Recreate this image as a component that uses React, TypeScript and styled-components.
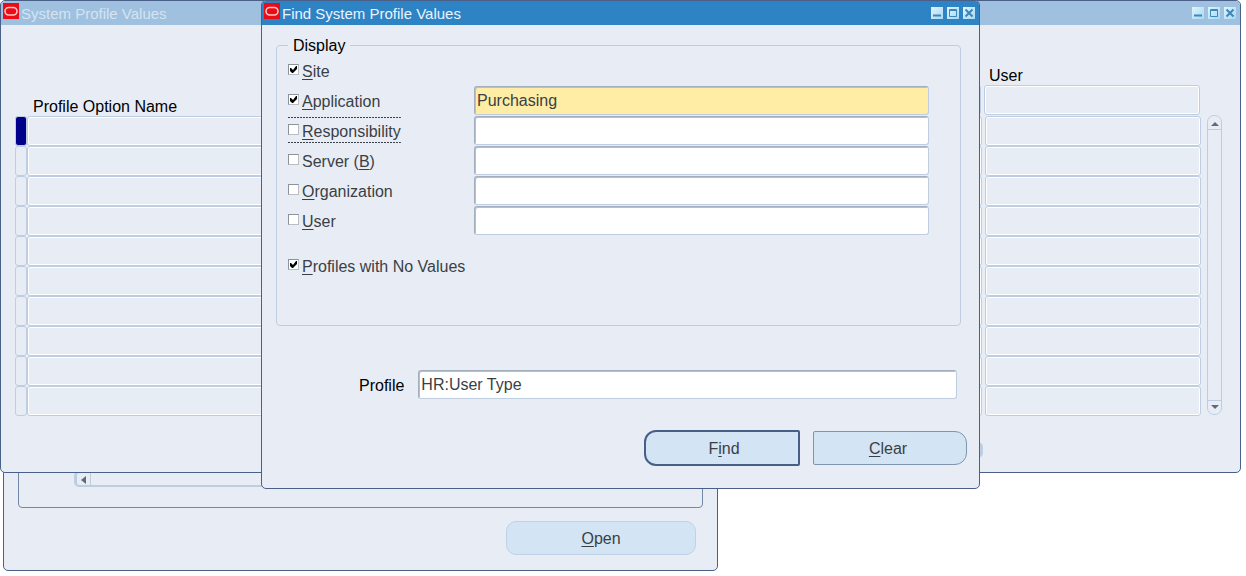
import React from "react";
import styled, { createGlobalStyle, css } from "styled-components";

const c = {
  face: "#e8edf5",
  line: "#bfcde0",
  frame: "#4b6088",
  titleOn: "#2d83c4",
  titleOff: "#9fc0de",
  button: "#d3e4f4",
  ink: "#3a3f45",
};

const GlobalStyle = createGlobalStyle`
  *, *::before, *::after { box-sizing: border-box; }
  body { margin: 0; background: #fff; }
  body, button, input { font: 16px/20px "Liberation Sans", Arial, sans-serif; }
  button { padding: 0; }
  u { text-decoration-thickness: 1px; text-underline-offset: 2px; text-decoration-skip-ink: none; }
`;

const Desktop = styled.main`
  position: relative;
  min-height: 100vh;
  overflow: hidden;
`;

const Frame = styled.section<{ $top: number; $left: number; $right: number }>`
  position: absolute;
  top: ${(p) => p.$top}px;
  left: ${(p) => p.$left}px;
  right: ${(p) => p.$right}px;
  background: ${c.face};
  border: 1px solid ${c.frame};
  border-radius: 5px;
  overflow: hidden;
`;

const TitleBar = styled.header<{ $active: boolean }>`
  display: flex;
  align-items: center;
  height: 24px;
  padding: 0 4px 0 2px;
  gap: 2px;
  background: ${(p) => (p.$active ? c.titleOn : c.titleOff)};
  color: ${(p) => (p.$active ? "#e9f4fd" : "#d3e4f4")};
`;

const Title = styled.h1`
  flex: 1;
  margin: 0;
  padding-top: 2px;
  font-size: 15px;
  line-height: 20px;
  font-weight: normal;
`;

const Logo = styled.svg`
  display: block;
  width: 16px;
  height: 16px;
  margin-bottom: 4px;
`;

const Controls = styled.div`
  display: flex;
  gap: 4px;
`;

const ControlButton = styled.button`
  width: 12px;
  height: 12px;
  border: 0;
  background: linear-gradient(135deg, #e0f4fd, #a6d8f2);
  svg { display: block; }
`;

const ProfilesBody = styled.div`
  padding: 40px 18px 14px 14px;
`;

const ColumnHeads = styled.div`
  display: flex;
  align-items: flex-end;
  gap: 3px;
  padding: 0 22px 1px 18px;
`;

const HeadLabel = styled.span`
  flex: 1;
  line-height: 16px;
`;

const HeadColumn = styled.label`
  display: flex;
  flex-direction: column;
  width: 216px;
  span { height: 20px; padding: 1px 0 0 5px; }
`;

const Records = styled.div`
  display: flex;
  gap: 6px;
`;

const RecordList = styled.div`
  flex: 1;
`;

const Record = styled.div`
  display: flex;
`;

const Marker = styled.span<{ $current: boolean }>`
  width: 12px;
  height: 30px;
  border: 1px solid ${c.line};
  border-radius: 3px;
  ${(p) => p.$current && css`
    background: #00008b;
  `}
`;

const GridField = styled.input<{ $wide?: boolean }>`
  width: 216px;
  height: 30px;
  padding: 0 3px;
  border: 1px solid ${c.line};
  border-radius: 3px;
  background: ${c.face};
  box-shadow: inset 0 0 0 1px #fff;
  outline: 0;
  ${(p) => p.$wide && css`
    flex: 1;
    min-width: 0;
  `}
  & + & { margin-left: 3px; }
`;

const VerticalBar = styled.div`
  display: flex;
  flex-direction: column;
  justify-content: space-between;
  width: 15px;
  height: 300px;
  margin-top: -1px;
  border: 1px solid ${c.line};
  border-radius: 7px;
`;

const ArrowButton = styled.button<{ $edge: "top" | "bottom" | "left" }>`
  display: grid;
  place-items: center;
  width: 13px;
  height: 13px;
  border: 0 solid ${c.line};
  background: none;
  ${(p) => p.$edge === "top" && "height: 14px; padding-top: 2px; border-bottom-width: 1px;"}
  ${(p) => p.$edge === "bottom" && "height: 14px; padding-bottom: 2px; border-top-width: 1px;"}
  ${(p) => p.$edge === "left" && "width: 14px; border-right-width: 1px;"}
`;

const HorizontalBar = styled.div`
  height: 16px;
  border: 2px solid ${c.line};
  border-left-width: 3px;
  border-radius: 5px;
`;

const ProfilesBar = styled(HorizontalBar)`
  margin: 26px 239px 0 400px;
  border-right-width: 3px;
`;

const FindBody = styled.form`
  padding: 10px 12px 22px 14px;
`;

const Group = styled.fieldset`
  min-width: 0;
  margin: 0 6px 0 0;
  padding: 0 31px 44px 11px;
  border: 1px solid ${c.line};
  border-radius: 4px;
  legend { padding: 1px 5px 0; color: #000; }
`;

const OptionRow = styled.div<{ $apart?: boolean }>`
  display: flex;
  align-items: flex-start;
  height: 30px;
  margin-top: ${(p) => (p.$apart ? 15 : 0)}px;
`;

const OptionCell = styled.div`
  width: 186px;
  padding-top: 1px;
  white-space: nowrap;
`;

const OptionLabel = styled.label<{ $focused?: boolean }>`
  display: inline-flex;
  align-items: center;
  gap: 3px;
  height: 26px;
  color: ${c.ink};
  ${(p) => p.$focused && css`
    background:
      repeating-linear-gradient(90deg, #39404a 0 2px, transparent 2px 3px) top / 100% 1px no-repeat,
      repeating-linear-gradient(90deg, #39404a 0 2px, transparent 2px 3px) bottom / 100% 1px no-repeat;
  `}
  span { padding-top: 3px; }
`;

const CheckBox = styled.input`
  appearance: none;
  width: 11px;
  height: 11px;
  margin: 0 0 1px;
  border: 1px solid #b9bec5;
  border-top-color: #8c9298;
  border-left-color: #8c9298;
  background: #fff;
  outline: 0;
  &:checked::after {
    content: "";
    display: block;
    width: 7px;
    height: 7px;
    margin: 1px;
    background: #000;
    clip-path: polygon(0 2px, 1px 2px, 3px 4px, 6px 0, 7px 0, 7px 3px, 3px 7px, 2px 7px, 0 5px);
  }
`;

const TextField = styled.input<{ $filled?: boolean }>`
  flex: 1;
  min-width: 0;
  height: 29px;
  padding: 0 2px;
  border: 1px solid ${c.line};
  border-top-color: #a3afbf;
  border-left-color: #a3afbf;
  border-radius: 3px;
  background: ${(p) => (p.$filled ? "#ffeda6" : "#fff")};
  box-shadow: inset 1px 1px #b3c0cf;
  color: ${c.ink};
  outline: 0;
`;

const ProfileRow = styled.label`
  display: flex;
  align-items: center;
  gap: 14px;
  margin-top: 44px;
  padding: 0 10px 0 83px;
  span { padding-top: 2px; }
`;

const Actions = styled.div`
  display: flex;
  align-items: center;
  justify-content: flex-end;
  gap: 13px;
  margin-top: 31px;
`;

const PushButton = styled.button<{ $kind: "primary" | "secondary" | "plain" }>`
  width: 154px;
  height: 34px;
  padding: 1px 4px 0 0;
  border: 1px solid #7f94ae;
  background: ${c.button};
  color: ${c.ink};
  border-radius: 2px 12px 12px 2px;
  ${(p) => p.$kind === "primary" && css`
    width: 156px;
    height: 36px;
    padding: 1px 0 0 4px;
    border: 2px solid #455f86;
    border-radius: 12px 2px 2px 12px;
  `}
  ${(p) => p.$kind === "plain" && css`
    width: 190px;
    padding: 1px 0 0;
    border-color: #bfd1e4;
    border-radius: 10px;
  `}
`;

const NavigatorBody = styled.div`
  padding: 10px 14px 15px;
`;

const NavigatorPanel = styled.div`
  padding: 20px 140px 20px 55px;
  border: 1px solid #7388a8;
  border-radius: 4px;
`;

const NavigatorActions = styled.div`
  display: flex;
  justify-content: flex-end;
  padding: 13px 7px 0 0;
`;

const arrows = {
  top: "M0 5L4 1L8 5Z",
  bottom: "M0 1H8L4 5Z",
  left: "M5 0V8L0 4Z",
};

function Arrow({ edge, label }: { edge: "top" | "bottom" | "left"; label: string }) {
  const side = edge === "left";
  return (
    <ArrowButton type="button" $edge={edge} aria-label={label}>
      <svg width={side ? 5 : 8} height={side ? 8 : 6} fill="#626a78">
        <path d={arrows[edge]} />
      </svg>
    </ArrowButton>
  );
}

const glyphs = [
  { label: "Minimize", d: "M2 8.5H10", width: 2 },
  { label: "Maximize", d: "M2.5 2.5H9.5V9.5H2.5ZM2 3.5H10", width: 1 },
  { label: "Close", d: "M2.5 2.5L9.5 9.5M9.5 2.5L2.5 9.5", width: 2 },
];

function WindowTitle({ text, active = false }: { text: string; active?: boolean }) {
  return (
    <TitleBar $active={active}>
      <Logo viewBox="0 0 16 16" aria-hidden="true">
        <rect width="16" height="16" fill="#ea0d17" />
        <rect x="2" y="4.5" width="12" height="7.5" rx="3.75" fill="none" stroke="#ffc4c2" strokeWidth="1.6" />
      </Logo>
      <Title>{text}</Title>
      <Controls>
        {glyphs.map((g) => (
          <ControlButton key={g.label} type="button" aria-label={g.label}>
            <svg width="12" height="12" fill="none" stroke="#3a87bb" strokeWidth={g.width}>
              <path d={g.d} />
            </svg>
          </ControlButton>
        ))}
      </Controls>
    </TitleBar>
  );
}

type Option = { id: string; label: React.ReactNode; name: string; checked?: boolean; focused?: boolean; value?: string };

const options: Option[] = [
  { id: "site", name: "Site", label: <><u>S</u>ite</>, checked: true },
  { id: "application", name: "Application", label: <><u>A</u>pplication</>, checked: true, value: "Purchasing" },
  { id: "responsibility", name: "Responsibility", label: <><u>R</u>esponsibility</>, focused: true, value: "" },
  { id: "server", name: "Server", label: <>Server (<u>B</u>)</>, value: "" },
  { id: "organization", name: "Organization", label: <><u>O</u>rganization</>, value: "" },
  { id: "user", name: "User", label: <><u>U</u>ser</>, value: "" },
  { id: "noValues", name: "Profiles with No Values", label: <><u>P</u>rofiles with No Values</>, checked: true },
];

const rows = Array.from({ length: 10 }, (_, i) => i);

export default function App() {
  return (
    <Desktop>
      <GlobalStyle />

      <Frame $top={439} $left={3} $right={528} aria-label="Navigator">
        <NavigatorBody>
          <NavigatorPanel>
            <HorizontalBar>
              <Arrow edge="left" label="Scroll left" />
            </HorizontalBar>
          </NavigatorPanel>
          <NavigatorActions>
            <PushButton type="button" $kind="plain"><u>O</u>pen</PushButton>
          </NavigatorActions>
        </NavigatorBody>
      </Frame>

      <Frame $top={0} $left={0} $right={5}>
        <WindowTitle text="System Profile Values" />
        <ProfilesBody>
          <ColumnHeads>
            <HeadLabel>Profile Option Name</HeadLabel>
            <HeadColumn>
              <GridField readOnly aria-label="Organization" />
            </HeadColumn>
            <HeadColumn>
              <span>User</span>
              <GridField readOnly />
            </HeadColumn>
          </ColumnHeads>
          <Records>
            <RecordList>
              {rows.map((i) => (
                <Record key={i}>
                  <Marker $current={i === 0} />
                  <GridField $wide readOnly aria-label={`Profile option name ${i + 1}`} />
                  <GridField readOnly aria-label={`Organization value ${i + 1}`} />
                  <GridField readOnly aria-label={`User value ${i + 1}`} />
                </Record>
              ))}
            </RecordList>
            <VerticalBar>
              <Arrow edge="top" label="Scroll up" />
              <Arrow edge="bottom" label="Scroll down" />
            </VerticalBar>
          </Records>
          <ProfilesBar />
        </ProfilesBody>
      </Frame>

      <Frame $top={0} $left={261} $right={266}>
        <WindowTitle text="Find System Profile Values" active />
        <FindBody onSubmit={(e) => e.preventDefault()}>
          <Group>
            <legend>Display</legend>
            {options.map((o) => (
              <OptionRow key={o.id} $apart={o.id === "noValues"}>
                <OptionCell>
                  <OptionLabel $focused={o.focused}>
                    <CheckBox type="checkbox" defaultChecked={o.checked} />
                    <span>{o.label}</span>
                  </OptionLabel>
                </OptionCell>
                {o.value !== undefined && (
                  <TextField $filled={o.value !== ""} defaultValue={o.value} aria-label={`${o.name} value`} />
                )}
              </OptionRow>
            ))}
          </Group>
          <ProfileRow>
            <span>Profile</span>
            <TextField defaultValue="HR:User Type" />
          </ProfileRow>
          <Actions>
            <PushButton type="submit" $kind="primary">F<u>i</u>nd</PushButton>
            <PushButton type="reset" $kind="secondary"><u>C</u>lear</PushButton>
          </Actions>
        </FindBody>
      </Frame>
    </Desktop>
  );
}
